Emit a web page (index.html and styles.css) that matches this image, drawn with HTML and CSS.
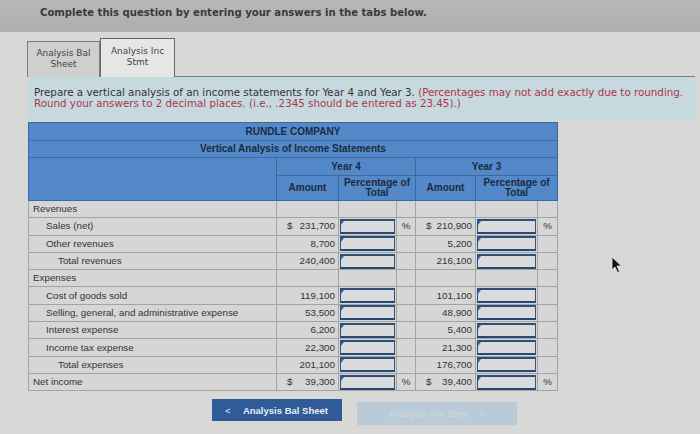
FILE: index.html
```html
<!DOCTYPE html>
<html>
<head>
<meta charset="utf-8">
<link rel="stylesheet" href="styles.css">
</head>
<body>
<div class="top">Complete this question by entering your answers in the tabs below.</div>
<div class="main">
  <div class="tabs">
    <div class="tab">Analysis Bal<br>Sheet</div>
    <div class="tab active">Analysis Inc<br>Stmt</div>
    <div class="tabfill"></div>
  </div>
  <div class="instr">
    <p>Prepare a vertical analysis of an income statements for Year 4 and Year 3. <span class="red">(Percentages may not add exactly due to rounding.<br>Round your answers to 2 decimal places. (i.e., .2345 should be entered as 23.45).)</span></p>
  </div>
  <table class="grid">
    <colgroup>
      <col class="c-lab"><col class="c-amt4"><col class="c-pct4"><col class="c-sym4"><col class="c-amt3"><col class="c-pct3"><col class="c-sym3">
    </colgroup>
    <thead>
      <tr class="h1"><th colspan="7">RUNDLE COMPANY</th></tr>
      <tr class="h2"><th colspan="7">Vertical Analysis of Income Statements</th></tr>
      <tr class="h3"><th rowspan="2"></th><th colspan="3">Year 4</th><th colspan="3">Year 3</th></tr>
      <tr class="h4"><th>Amount</th><th colspan="2">Percentage of<br>Total</th><th>Amount</th><th colspan="2">Percentage of<br>Total</th></tr>
    </thead>
    <tbody>
      <tr><td class="lab">Revenues</td><td></td><td></td><td></td><td></td><td></td><td></td></tr>
      <tr><td class="lab i1">Sales (net)</td><td class="amt"><span class="d">$</span>231,700</td><td class="in"><span class="box"></span></td><td class="sym">%</td><td class="amt"><span class="d">$</span>210,900</td><td class="in"><span class="box"></span></td><td class="sym">%</td></tr>
      <tr><td class="lab i1">Other revenues</td><td class="amt">8,700</td><td class="in"><span class="box"></span></td><td></td><td class="amt">5,200</td><td class="in"><span class="box"></span></td><td></td></tr>
      <tr><td class="lab i2">Total revenues</td><td class="amt">240,400</td><td class="in"><span class="box"></span></td><td></td><td class="amt">216,100</td><td class="in"><span class="box"></span></td><td></td></tr>
      <tr><td class="lab">Expenses</td><td></td><td></td><td></td><td></td><td></td><td></td></tr>
      <tr><td class="lab i1">Cost of goods sold</td><td class="amt">119,100</td><td class="in"><span class="box"></span></td><td></td><td class="amt">101,100</td><td class="in"><span class="box"></span></td><td></td></tr>
      <tr><td class="lab i1">Selling, general, and administrative expense</td><td class="amt">53,500</td><td class="in"><span class="box"></span></td><td></td><td class="amt">48,900</td><td class="in"><span class="box"></span></td><td></td></tr>
      <tr><td class="lab i1">Interest expense</td><td class="amt">6,200</td><td class="in"><span class="box"></span></td><td></td><td class="amt">5,400</td><td class="in"><span class="box"></span></td><td></td></tr>
      <tr><td class="lab i1">Income tax expense</td><td class="amt">22,300</td><td class="in"><span class="box"></span></td><td></td><td class="amt">21,300</td><td class="in"><span class="box"></span></td><td></td></tr>
      <tr><td class="lab i2">Total expenses</td><td class="amt">201,100</td><td class="in"><span class="box"></span></td><td></td><td class="amt">176,700</td><td class="in"><span class="box"></span></td><td></td></tr>
      <tr><td class="lab">Net income</td><td class="amt"><span class="d">$</span>39,300</td><td class="in"><span class="box"></span></td><td class="sym">%</td><td class="amt"><span class="d">$</span>39,400</td><td class="in"><span class="box"></span></td><td class="sym">%</td></tr>
    </tbody>
  </table>
  <div class="nav">
    <button class="btn prev"><span class="chev">&lt;</span> Analysis Bal Sheet</button>
    <button class="btn next" disabled>Analysis Inc Stmt <span class="chev">&gt;</span></button>
  </div>
</div>
<svg class="cursor" width="12" height="18" viewBox="0 0 12 18"><path d="M1 1 L1 14 L4 11 L6.5 16.5 L8.5 15.5 L6 10 L10.5 10 Z" fill="#111" stroke="#eee" stroke-width="0.8"/></svg>
</body>
</html>
```
FILE: styles.css
```css
html, body { margin: 0; padding: 0; }
body {
  width: 700px;
  height: 434px;
  overflow: hidden;
  background: #d8d8d6;
  font-family: "Liberation Sans", Arial, sans-serif;
  color: #333;
  position: relative;
}
.top {
  height: 32px;
  box-sizing: border-box;
  padding: 7px 0 0 40px;
  background: linear-gradient(#b7b7b7, #aeaeae);
  font-family: "DejaVu Sans", Verdana, sans-serif;
  font-weight: bold;
  font-size: 10.1px;
  color: #3a3a3a;
}
.main {
  padding: 6px 5px 0 27px;
}
.tabs {
  display: flex;
  align-items: flex-end;
  height: 39px;
}
.tab {
  box-sizing: border-box;
  width: 73px;
  height: 36px;
  border: 1px solid #7a7a7a;
  border-bottom: none;
  background: #cfcfcf;
  font-family: "DejaVu Sans", Verdana, sans-serif;
  font-size: 9px;
  line-height: 11px;
  text-align: center;
  color: #444;
  padding-top: 6px;
}
.tab.active {
  width: 75px;
  height: 39px;
  background: #e6e6e6;
  border: 1px solid #666;
  border-bottom: none;
  padding-top: 7px;
}
.tabfill {
  flex: 1;
  border-bottom: 1px solid #7c7c7c;
}
.instr {
  background: #c5d9df;
  height: 43px;
  box-sizing: border-box;
  padding: 10px 0 0 7px;
}
.instr p {
  margin: 0;
  font-family: "DejaVu Sans", Verdana, sans-serif;
  font-size: 10.3px;
  line-height: 10.5px;
  color: #333;
}
.red { color: #b03449; }
.grid {
  margin: 2px 0 0 1px;
  border-collapse: collapse;
  table-layout: fixed;
  width: 529px;
  font-size: 9.8px;
}
.c-lab { width: 248px; }
.c-amt4 { width: 62px; }
.c-pct4 { width: 58px; }
.c-sym4 { width: 19px; }
.c-amt3 { width: 60px; }
.c-pct3 { width: 62px; }
.c-sym3 { width: 20px; }
.grid th {
  background: #5389c8;
  border: 1px solid #3b69a3;
  color: #1c2a40;
  font-weight: bold;
  font-size: 10px;
  padding: 0;
  line-height: 10px;
}
.h1 th { height: 17px; }
.h2 th { height: 16px; }
.h3 th { height: 17px; }
.h4 th { height: 24px; }
.grid tbody tr { height: 17.3px; }
.grid td {
  background: #d6d6d6;
  border: 1px solid #a3a3a3;
  padding: 0;
  color: #333;
  white-space: nowrap;
  line-height: 12px;
}
.lab { padding-left: 4px !important; }
.lab.i1 { padding-left: 17px !important; }
.lab.i2 { padding-left: 29px !important; }
.amt {
  text-align: right;
  padding-right: 3px !important;
}
.d {
  float: left;
  padding-left: 10px;
}
.sym { text-align: center; }
.in {
  padding: 0 !important;
}
.box {
  display: block;
  position: relative;
  height: 11px;
  margin: 0 1px;
  border: 1px solid #2f5379;
  border-bottom: 2px solid #274a70;
  border-top: 2px solid #2c4f76;
  background: #d9dbdd;
}
.box::before {
  content: "";
  position: absolute;
  left: 0;
  top: 0;
  border-top: 4px solid #2a64b4;
  border-right: 3px solid transparent;
}
.nav {
  display: flex;
  justify-content: center;
  align-items: flex-start;
  gap: 15px;
  margin-top: 8px;
  padding-left: 6px;
}
.btn {
  border: none;
  font-family: "Liberation Sans", Arial, sans-serif;
  font-weight: bold;
  font-size: 9.5px;
  padding: 0;
}
.prev {
  width: 130px;
  height: 22px;
  background: #2f5c98;
  color: #e8eef6;
}
.prev .chev { margin-right: 10px; font-weight: normal; }
.next {
  width: 160px;
  height: 23px;
  margin-top: 3px;
  background: #b8cbd6;
  color: #c9d7df;
}
.next .chev { margin-left: 8px; font-weight: normal; }
.cursor {
  position: absolute;
  left: 611px;
  top: 256px;
}
```
